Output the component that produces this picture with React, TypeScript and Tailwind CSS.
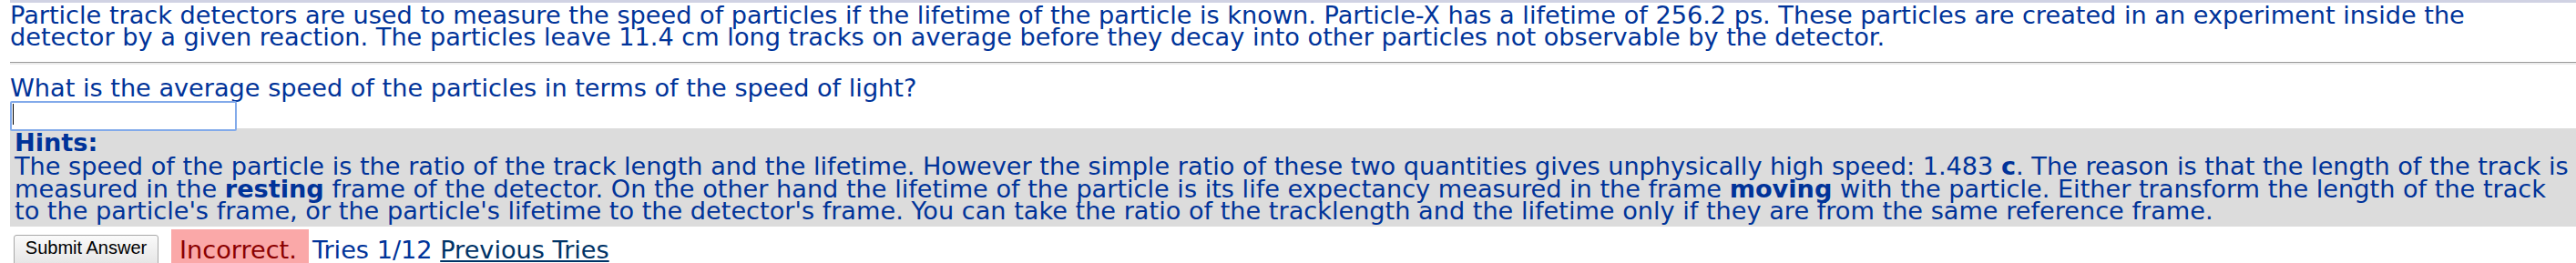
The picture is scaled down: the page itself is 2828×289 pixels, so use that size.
import React from "react";

export default function App() {
  return (
    <div className="bg-white w-[2828px] h-[289px] overflow-hidden">
      <div className="pl-[11px] font-['DejaVu_Sans',Verdana,sans-serif] text-[#003399] text-[27.15px]">
        <div className="h-[3px] bg-[#d0d2e3]" />
        <p className="mt-[2px] leading-[24px]">
          Particle track detectors are used to measure the speed of particles if the lifetime of the particle is known. Particle-X has a lifetime of 256.2 ps. These particles are created in an experiment inside the detector by a given reaction. The particles leave 11.4 cm long tracks on average before they decay into other particles not observable by the detector.
        </p>
        <div className="mt-[15px] h-[3px] border-t border-[#9a9a9a] bg-[#ececec]" />
        <p className="mt-[15px] leading-[22px]">
          What is the average speed of the particles in terms of the speed of light?
        </p>
        <div className="relative w-[249px] h-[33px]">
          <input
            type="text"
            aria-label="answer"
            className="w-full h-full border-2 border-[#82aaea] rounded-[2px] bg-white outline-none"
          />
          <span className="absolute left-[3px] top-[6px] w-[1px] h-[23px] bg-black" />
        </div>
        <div className="bg-[#dcdcdc] pl-[5px] pr-[4px] pt-[4px] pb-[4px]">
          <div className="font-bold leading-[24px] mb-[2px]">Hints:</div>
          <p className="leading-[24.6px]">
            The speed of the particle is the ratio of the track length and the lifetime. However the simple ratio of these two quantities gives unphysically high speed: 1.483 <b>c</b>. The reason is that the length of the track is measured in the <b>resting</b> frame of the detector. On the other hand the lifetime of the particle is its life expectancy measured in the frame <b>moving</b> with the particle. Either transform the length of the track to the particle's frame, or the particle's lifetime to the detector's frame. You can take the ratio of the tracklength and the lifetime only if they are from the same reference frame.
          </p>
        </div>
        <div className="flex items-start mt-[3px]">
          <button
            type="button"
            className="ml-[4px] mt-[6px] w-[159px] h-[36px] pt-[2px] flex justify-center items-start border border-[#a9a9a9] rounded-[3px] bg-gradient-to-b from-[#fafafa] to-[#e4e4e4] font-['Liberation_Sans',Arial,sans-serif] text-[20px] leading-[22px] text-black"
          >
            Submit Answer
          </button>
          <span className="ml-[14px] bg-[#faa8a8] text-[#8b0000] leading-[45px] pl-[9px] pr-[13px]">
            Incorrect.
          </span>
          <span className="ml-[4px] leading-[45px] whitespace-pre">
            Tries 1/12{" "}
            <a href="#" className="text-[#003366] underline">
              Previous Tries
            </a>
          </span>
        </div>
      </div>
    </div>
  );
}
